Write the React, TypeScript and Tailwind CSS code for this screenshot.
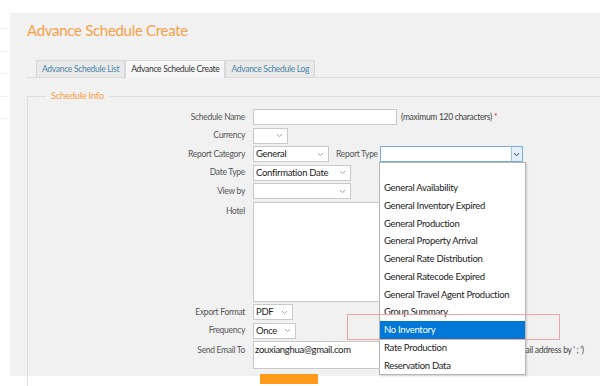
import { ReactNode } from 'react';

const reportTypes = [
  'General Availability',
  'General Inventory Expired',
  'General Production',
  'General Property Arrival',
  'General Rate Distribution',
  'General Ratecode Expired',
  'General Travel Agent Production',
  'Group Summary',
  'No Inventory',
  'Rate Production',
  'Reservation Data',
];

function Chevron() {
  return (
    <svg width="7" height="5" viewBox="0 0 7 5" className="shrink-0">
      <path d="M1 1.2 L3.5 3.6 L6 1.2" fill="none" stroke="#9a9a9a" strokeWidth="0.9" />
    </svg>
  );
}

function Select({ value = '', width }: { value?: string; width: string }) {
  return (
    <div className={`flex h-[16px] items-center justify-between border border-[#c9c9c9] bg-white pl-[2px] pr-[4px] ${width}`}>
      <span className="text-[9.5px] leading-none text-[#222]">{value}</span>
      <Chevron />
    </div>
  );
}

function Row({ label, children, tall }: { label: string; children: ReactNode; tall?: boolean }) {
  return (
    <div className={`flex ${tall ? 'items-start' : 'items-center'}`}>
      <div className={`w-[218px] shrink-0 text-right text-[8.5px] text-[#555] ${tall ? 'pt-[3px]' : ''}`}>{label}</div>
      <div className="ml-[8px] flex items-center">{children}</div>
    </div>
  );
}

export default function App() {
  return (
    <div className="relative h-[386px] w-[600px] overflow-hidden bg-white tracking-[-0.3px]" style={{ fontFamily: 'Lato, "Open Sans", sans-serif' }}>
      <div className="flex h-full">
        {/* faint left gutter */}
        <div className="flex w-[10px] flex-col pt-[28px]">
          {[0, 1, 2, 3, 4].map((i) => (
            <div key={i} className="mb-[21.5px] h-px w-[8px] bg-[#f2f2f2]" />
          ))}
        </div>

        <div className="mt-[13px] h-[363px] flex-1 bg-[#f1f1f1] pl-[17px]">
          <h1 className="pt-[7px] text-[15px] leading-[20px] text-[#f7a046]">Advance Schedule Create</h1>

          {/* tabs */}
          <div className="mt-[20px] flex border-b border-[#dcdcdc] pl-[9px]">
            <div className="-mb-px border border-[#d8d8d8] bg-[#e9e9e9] px-[5px] py-[3px] text-[8.5px] leading-[10px] text-[#4a86a8]">Advance Schedule List</div>
            <div className="-mb-px border border-b-0 border-[#d8d8d8] bg-[#f7f7f7] px-[5px] py-[3px] text-[8.5px] leading-[10px] text-[#333]">Advance Schedule Create</div>
            <div className="-mb-px border border-[#d8d8d8] bg-[#e9e9e9] px-[5px] py-[3px] text-[8.5px] leading-[10px] text-[#4a86a8]">Advance Schedule Log</div>
          </div>

          {/* fieldset */}
          <div className="relative mt-[18px] h-[300px] border-l border-t border-[#dedede]">
            <div className="absolute -top-[7px] left-[18px] bg-[#f1f1f1] px-[5px] text-[9.5px] leading-[12px] text-[#f7a046]">Schedule Info</div>

            <div className="-ml-px flex flex-col gap-[2.5px] pt-[12px]">
              <Row label="Schedule Name">
                <div className="h-[16px] w-[144px] border border-[#c9c9c9] bg-white" />
                <span className="ml-[4px] text-[8.5px] text-[#444]">(maximum 120 characters) <span className="text-[#e33]">*</span></span>
              </Row>
              <Row label="Currency">
                <Select width="w-[35px]" />
              </Row>
              <Row label="Report Category">
                <Select value="General" width="w-[76px]" />
                <span className="ml-[7px] text-[8.5px] text-[#555]">Report Type</span>
                <div className="ml-[2px] flex h-[16px] w-[143px] items-stretch border border-[#7aaee0] bg-white">
                  <div className="flex-1" />
                  <div className="flex w-[11px] items-center justify-center border-l border-[#9cc4ea] bg-[#e3effa]">
                    <svg width="7" height="5" viewBox="0 0 7 5">
                      <path d="M1 1.2 L3.5 3.6 L6 1.2" fill="none" stroke="#333" strokeWidth="0.9" />
                    </svg>
                  </div>
                </div>
              </Row>
              <Row label="Date Type">
                <Select value="Confirmation Date" width="w-[98px]" />
              </Row>
              <Row label="View by">
                <Select width="w-[98px]" />
              </Row>
              <Row label="Hotel" tall>
                <div className="h-[100px] w-[196px] border border-[#c9c9c9] bg-white" />
              </Row>
              <Row label="Export Format">
                <Select value="PDF" width="w-[40px]" />
              </Row>
              <Row label="Frequency">
                <Select value="Once" width="w-[43px]" />
              </Row>
              <Row label="Send Email To" tall>
                <div className="h-[28px] w-[196px] border border-[#c9c9c9] bg-white px-[1px] pt-[2px] text-[9.5px] leading-[11px] text-[#222]">zouxianghua@gmail.com</div>
                <span className="ml-[3px] self-start whitespace-nowrap pt-[3px] text-[8.5px] text-[#444]">(separate multiple email address by ' ; ')</span>
              </Row>
              <div className="ml-[233px] mt-[2px] h-[10px] w-[58px] bg-[#ff9a1a]" />
            </div>
          </div>
        </div>
      </div>

      {/* open report type list */}
      <div className="absolute left-[379px] top-[162px] w-[147px] border border-[#b5b5b5] bg-white pt-[16px] shadow-[1px_1px_2px_rgba(0,0,0,0.15)]">
        {reportTypes.map((t) => (
          <div
            key={t}
            className={`h-[17.75px] whitespace-nowrap px-[4px] text-[9.5px] leading-[17.75px] ${t === 'No Inventory' ? 'bg-[#0078d7] text-white' : 'text-[#222]'}`}
          >
            {t}
          </div>
        ))}
      </div>

      {/* annotation box */}
      <div className="absolute left-[347px] top-[314px] h-[26px] w-[213px] border border-[#f3a3a3]" />
    </div>
  );
}
